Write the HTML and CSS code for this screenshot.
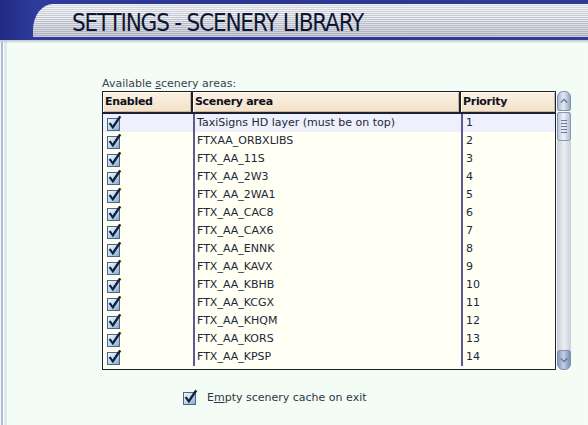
FILE: index.html
```html
<!DOCTYPE html>
<html lang="en">
<head>
    <meta charset="UTF-8">
    <title>Settings - Scenery Library</title>
    <link rel="stylesheet" href="styles.css">
</head>
<body>
<svg class="defs" width="0" height="0">
    <defs>
        <linearGradient id="boxfill" x1="0" y1="0" x2="1" y2="1">
            <stop offset="0" stop-color="#f4fbff"/>
            <stop offset="0.55" stop-color="#b9d6ec"/>
            <stop offset="1" stop-color="#7ea6c8"/>
        </linearGradient>
        <symbol id="tick" viewBox="0 0 16 16">
            <rect x="1.5" y="3.5" width="12" height="12" fill="url(#boxfill)" stroke="#4e6784"/>
            <path d="M2.6 8.6 L4.7 7.4 L6.6 10.6 L13.2 0.8 L15.3 2 L6.9 14.3 Z" fill="#16203a"/>
        </symbol>
    </defs>
</svg>
<div class="page">
    <header class="banner">
        <div class="plate">
            <h1>SETTINGS - SCENERY LIBRARY</h1>
        </div>
    </header>
    <main class="content">
        <p class="caption">Available <u>s</u>cenery areas:</p>
        <div class="listbox">
            <div class="list">
                <div class="row head">
                    <div class="hcell">Enabled</div>
                    <div class="hcell">Scenery area</div>
                    <div class="hcell">Priority</div>
                </div>
                <div class="row sel">
                    <div class="cell chk"><svg><use href="#tick"/></svg></div>
                    <div class="cell name">TaxiSigns HD layer (must be on top)</div>
                    <div class="cell prio">1</div>
                </div>
                <div class="row">
                    <div class="cell chk"><svg><use href="#tick"/></svg></div>
                    <div class="cell name">FTXAA_ORBXLIBS</div>
                    <div class="cell prio">2</div>
                </div>
                <div class="row">
                    <div class="cell chk"><svg><use href="#tick"/></svg></div>
                    <div class="cell name">FTX_AA_11S</div>
                    <div class="cell prio">3</div>
                </div>
                <div class="row">
                    <div class="cell chk"><svg><use href="#tick"/></svg></div>
                    <div class="cell name">FTX_AA_2W3</div>
                    <div class="cell prio">4</div>
                </div>
                <div class="row">
                    <div class="cell chk"><svg><use href="#tick"/></svg></div>
                    <div class="cell name">FTX_AA_2WA1</div>
                    <div class="cell prio">5</div>
                </div>
                <div class="row">
                    <div class="cell chk"><svg><use href="#tick"/></svg></div>
                    <div class="cell name">FTX_AA_CAC8</div>
                    <div class="cell prio">6</div>
                </div>
                <div class="row">
                    <div class="cell chk"><svg><use href="#tick"/></svg></div>
                    <div class="cell name">FTX_AA_CAX6</div>
                    <div class="cell prio">7</div>
                </div>
                <div class="row">
                    <div class="cell chk"><svg><use href="#tick"/></svg></div>
                    <div class="cell name">FTX_AA_ENNK</div>
                    <div class="cell prio">8</div>
                </div>
                <div class="row">
                    <div class="cell chk"><svg><use href="#tick"/></svg></div>
                    <div class="cell name">FTX_AA_KAVX</div>
                    <div class="cell prio">9</div>
                </div>
                <div class="row">
                    <div class="cell chk"><svg><use href="#tick"/></svg></div>
                    <div class="cell name">FTX_AA_KBHB</div>
                    <div class="cell prio">10</div>
                </div>
                <div class="row">
                    <div class="cell chk"><svg><use href="#tick"/></svg></div>
                    <div class="cell name">FTX_AA_KCGX</div>
                    <div class="cell prio">11</div>
                </div>
                <div class="row">
                    <div class="cell chk"><svg><use href="#tick"/></svg></div>
                    <div class="cell name">FTX_AA_KHQM</div>
                    <div class="cell prio">12</div>
                </div>
                <div class="row">
                    <div class="cell chk"><svg><use href="#tick"/></svg></div>
                    <div class="cell name">FTX_AA_KORS</div>
                    <div class="cell prio">13</div>
                </div>
                <div class="row">
                    <div class="cell chk"><svg><use href="#tick"/></svg></div>
                    <div class="cell name">FTX_AA_KPSP</div>
                    <div class="cell prio">14</div>
                </div>
            </div>
            <div class="scrollbar">
                <div class="sbtn up"><svg viewBox="0 0 10 6"><path d="M1 5 L5 1 L9 5" /></svg></div>
                <div class="thumb"><span></span><span></span><span></span><span></span><span></span></div>
                <div class="track"></div>
                <div class="sbtn down"><svg viewBox="0 0 10 6"><path d="M1 1 L5 5 L9 1" /></svg></div>
            </div>
        </div>
        <label class="cache">
            <svg><use href="#tick"/></svg>
            <span>E<u>m</u>pty scenery cache on exit</span>
        </label>
    </main>
</div>
</body>
</html>
```

FILE: styles.css
```css
* {
    margin: 0;
    padding: 0;
    box-sizing: border-box;
}

body {
    width: 588px;
    height: 425px;
    overflow: hidden;
    background: #f4fcf6;
    font-family: "DejaVu Sans", Verdana, sans-serif;
    font-size: 11px;
    color: #1d2838;
}

.defs {
    position: absolute;
}

.page {
    height: 425px;
    display: flex;
    flex-direction: column;
}

/* title banner */
.banner {
    height: 40px;
    display: flex;
    padding: 4px 0 3px;
    background: linear-gradient(90deg, #202a84, #2f3c9c 6%, #2b3690 40%, #303c98);
}

.plate {
    flex: 1;
    margin-left: 33px;
    border-top-left-radius: 20px 26px;
    padding-left: 39px;
    display: flex;
    align-items: center;
    background:
        linear-gradient(180deg, rgba(255, 255, 255, .35), rgba(255, 255, 255, 0) 40%, rgba(110, 115, 145, .3)),
        repeating-linear-gradient(180deg, #eff0f4 0 1px, #c2c6d2 1px 2px);
}

.plate h1 {
    font-family: "DejaVu Sans Condensed", "DejaVu Sans", sans-serif;
    font-weight: normal;
    font-size: 24px;
    letter-spacing: -1.2px;
    color: #0f1630;
    line-height: 1;
    padding-top: 5px;
}

/* content area */
.content {
    flex: 1;
    padding: 36px 0 0 102px;
    background: #f4fcf6;
    box-shadow: inset 0 3px 2px -1px #c9cdd3, inset 1px 0 #f4fcf6, inset 3px 0 #a9bcd8, inset 4px 0 #ffffff, inset 7px 0 #e4e8ec;
}

.caption {
    color: #38434d;
    line-height: 14px;
    height: 15px;
    padding-top: 1px;
}

.caption u, .cache u {
    text-decoration-thickness: 1px;
    text-underline-offset: 1px;
}

.listbox {
    width: 470px;
    height: 279px;
    display: flex;
    margin-top: 0;
}

.list {
    width: 454px;
    height: 279px;
    overflow: hidden;
    border: 1px solid #1b2134;
    background: #fffff4;
}

.row {
    display: grid;
    grid-template-columns: 90px 268px 1fr;
    height: 18px;
    align-items: center;
}

.row.head {
    height: 22px;
    align-items: stretch;
    background: #1b2134;
    gap: 2px;
    padding-bottom: 2px;
    grid-template-columns: 88px 266px 1fr;
}

.hcell {
    background: linear-gradient(180deg, #fbf0e0, #f3e2cb);
    box-shadow: inset 1px 1px #fffaf2, inset -1px -1px #c8b79d;
    font-weight: bold;
    color: #0c1020;
    padding-left: 2px;
    line-height: 20px;
    letter-spacing: -0.3px;
}

.row.sel {
    background: #eef0fb;
}

.cell {
    height: 18px;
    line-height: 18px;
    white-space: nowrap;
}

.chk {
    padding-left: 3px;
    display: flex;
    align-items: center;
}

.chk svg, .cache svg {
    width: 16px;
    height: 16px;
}

.name {
    border-left: 2px solid #5c5993;
    padding-left: 2px;
}

.prio {
    border-left: 2px solid #5c5993;
    padding-left: 3px;
}

/* scrollbar */
.scrollbar {
    width: 16px;
    display: flex;
    flex-direction: column;
    padding: 0 1px 0 1px;
}

.sbtn {
    height: 20px;
    border: 1px solid #8291ad;
    background: linear-gradient(90deg, #aab8d0, #e4eaf4 45%, #9aa9c4);
    display: flex;
    align-items: center;
    justify-content: center;
}

.sbtn.up {
    border-radius: 6px 6px 2px 2px;
}

.sbtn.down {
    border-radius: 2px 2px 6px 6px;
    background: linear-gradient(90deg, #8596b8, #c3cfe4 45%, #7d8eb0);
}

.sbtn svg {
    width: 8px;
    height: 6px;
}

.sbtn path {
    fill: none;
    stroke: #5d6f96;
    stroke-width: 1.6;
}

.thumb {
    height: 29px;
    margin-top: 1px;
    border: 1px solid #8a98b4;
    border-radius: 2px;
    background: linear-gradient(90deg, #b8c4d8, #eef2f8 45%, #b0bdd3);
    display: flex;
    flex-direction: column;
    align-items: center;
    justify-content: center;
    gap: 2px;
}

.thumb span {
    width: 6px;
    height: 1px;
    background: #6b7a98;
}

.track {
    flex: 1;
    background: linear-gradient(90deg, #c6ccd6, #eceff3 50%, #c9cfd8);
}

/* bottom option */
.cache {
    display: flex;
    align-items: center;
    gap: 9px;
    margin: 19px 0 0 80px;
    color: #2c3844;
}
```
